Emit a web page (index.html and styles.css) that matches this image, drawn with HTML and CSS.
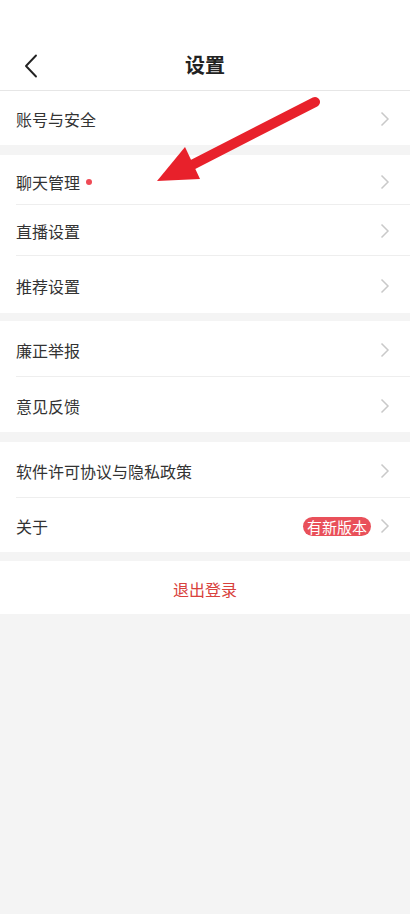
FILE: index.html
```html
<!DOCTYPE html>
<html lang="zh">
<head>
<meta charset="utf-8">
<link rel="stylesheet" href="styles.css">
</head>
<body>
<div class="page">
  <header class="header">
    <div class="bar">
      <svg class="back" width="14" height="24" viewBox="0 0 14 24"><path d="M12 1.5 L2 12 L12 22.5" fill="none" stroke="#222" stroke-width="1.9" stroke-linecap="round" stroke-linejoin="round"/></svg>
      <div class="title">设置</div>
    </div>
  </header>

  <section class="group g1">
    <div class="row h54"><span class="label">账号与安全</span><svg class="chev" width="10" height="16" viewBox="0 0 10 16"><path d="M1.5 1.5 L8 8 L1.5 14.5" fill="none" stroke="#c9c9c9" stroke-width="1.5"/></svg></div>
  </section>

  <section class="group g2">
    <div class="row h49 low"><span class="label">聊天管理<i class="dot"></i></span><svg class="chev" width="10" height="16" viewBox="0 0 10 16"><path d="M1.5 1.5 L8 8 L1.5 14.5" fill="none" stroke="#c9c9c9" stroke-width="1.5"/></svg></div>
    <div class="row h51"><span class="label">直播设置</span><svg class="chev" width="10" height="16" viewBox="0 0 10 16"><path d="M1.5 1.5 L8 8 L1.5 14.5" fill="none" stroke="#c9c9c9" stroke-width="1.5"/></svg></div>
    <div class="row h58"><span class="label">推荐设置</span><svg class="chev" width="10" height="16" viewBox="0 0 10 16"><path d="M1.5 1.5 L8 8 L1.5 14.5" fill="none" stroke="#c9c9c9" stroke-width="1.5"/></svg></div>
  </section>

  <section class="group g3">
    <div class="row h55"><span class="label">廉正举报</span><svg class="chev" width="10" height="16" viewBox="0 0 10 16"><path d="M1.5 1.5 L8 8 L1.5 14.5" fill="none" stroke="#c9c9c9" stroke-width="1.5"/></svg></div>
    <div class="row h56"><span class="label">意见反馈</span><svg class="chev" width="10" height="16" viewBox="0 0 10 16"><path d="M1.5 1.5 L8 8 L1.5 14.5" fill="none" stroke="#c9c9c9" stroke-width="1.5"/></svg></div>
  </section>

  <section class="group g4">
    <div class="row h55"><span class="label">软件许可协议与隐私政策</span><svg class="chev" width="10" height="16" viewBox="0 0 10 16"><path d="M1.5 1.5 L8 8 L1.5 14.5" fill="none" stroke="#c9c9c9" stroke-width="1.5"/></svg></div>
    <div class="row h55"><span class="label">关于</span><span class="right"><span class="badge">有新版本</span><svg class="chev" width="10" height="16" viewBox="0 0 10 16"><path d="M1.5 1.5 L8 8 L1.5 14.5" fill="none" stroke="#c9c9c9" stroke-width="1.5"/></svg></span></div>
  </section>

  <section class="group logout">退出登录</section>

  <svg class="arrow" width="410" height="200" viewBox="0 0 410 200">
    <line x1="315" y1="12" x2="190" y2="76" stroke="#e8212b" stroke-width="10" stroke-linecap="round"/>
    <polygon points="157,91 185,57 200,89" fill="#e8212b"/>
  </svg>
</div>
</body>
</html>
```

FILE: styles.css
```css
* { box-sizing: border-box; }
html, body { margin: 0; padding: 0; }
body {
  background: #f4f4f4;
  font-family: "Noto Sans CJK SC", "Noto Sans", sans-serif;
  color: #333;
}
.page {
  position: relative;
  width: 410px;
  min-height: 914px;
  background: #f4f4f4;
}
.header {
  background: #fff;
  padding-top: 40px;
  border-bottom: 1px solid #e6e6e6;
}
.bar {
  height: 50px;
  position: relative;
  display: flex;
  align-items: center;
  justify-content: center;
}
.back {
  position: absolute;
  left: 24px;
  top: 14px;
}
.title {
  font-size: 20px;
  font-weight: 700;
  color: #222;
  line-height: 1;
}
.group {
  background: #fff;
  padding-left: 16px;
}
.g1 { margin-bottom: 10px; }
.g2 { margin-bottom: 8px; }
.g3 { margin-bottom: 10px; }
.g4 { margin-bottom: 9px; }
.row {
  display: flex;
  align-items: center;
  justify-content: space-between;
  padding-right: 20px;
  padding-top: 2px;
}
.row + .row { border-top: 1px solid #eeeeee; }
.h49 { height: 49px; }
.h51 { height: 51px; }
.h54 { height: 54px; }
.h55 { height: 55px; }
.h56 { height: 56px; }
.h58 { height: 58px; }
.low { padding-top: 4px; }
.label {
  font-size: 16px;
  color: #333;
  display: flex;
  align-items: center;
}
.dot {
  display: inline-block;
  width: 6px;
  height: 6px;
  border-radius: 50%;
  background: #ef4a55;
  margin-left: 6px;
}
.chev { display: block; }
.right {
  display: flex;
  align-items: center;
  gap: 9px;
}
.badge {
  background: #e9505a;
  color: #fff;
  font-size: 15px;
  line-height: 19px;
  height: 19px;
  padding: 0 4px;
  border-radius: 10px;
}
.logout {
  padding-left: 0;
  padding-top: 2px;
  height: 53px;
  display: flex;
  align-items: center;
  justify-content: center;
  font-size: 16px;
  color: #d8413c;
}
.arrow {
  position: absolute;
  left: 0;
  top: 90px;
  pointer-events: none;
}
```
